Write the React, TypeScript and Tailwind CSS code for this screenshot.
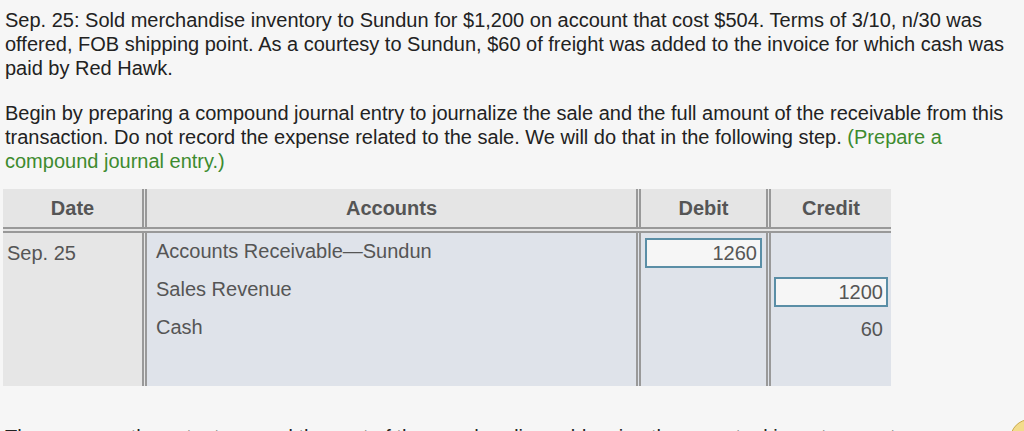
import React from 'react';

const Input = ({ value }: { value: string }) => (
  <div className="h-[30px] border-2 border-[#5a8ea6] bg-[#f6f6f6] text-right pr-[3px] text-[20px] leading-[26px] text-[#555]">
    {value}
  </div>
);

export default function App() {
  return (
    <div className="relative h-[431px] overflow-hidden bg-[#f6f6f6] font-['Liberation_Sans',Arial,sans-serif]">
      <div className="pl-[5px] pt-[8px] text-[20px] leading-[24px] text-[#222]">
        <p className="whitespace-nowrap">
          Sep. 25: Sold merchandise inventory to Sundun for $1,200 on account that cost $504. Terms of 3/10, n/30 was
          <br />
          offered, FOB shipping point. As a courtesy to Sundun, $60 of freight was added to the invoice for which cash was
          <br />
          paid by Red Hawk.
        </p>
        <p className="mt-[21px] whitespace-nowrap">
          Begin by preparing a compound journal entry to journalize the sale and the full amount of the receivable from this
          <br />
          transaction. Do not record the expense related to the sale. We will do that in the following step.{' '}
          <span className="text-[#3d8b2f]">(Prepare a</span>
          <br />
          <span className="text-[#3d8b2f]">compound journal entry.)</span>
        </p>
      </div>

      {/* journal table */}
      <div className="ml-[3px] mt-[16px] w-[888px] text-[20px] text-[#555]">
        <div className="flex h-[44px] bg-[#e5e5e5] border-b-[6px] border-double border-[#999] font-bold">
          <div className="w-[144px] flex items-center justify-center border-r-[5px] border-double border-[#999] shrink-0">Date</div>
          <div className="w-[494px] flex items-center justify-center border-r-[5px] border-double border-[#999] shrink-0">Accounts</div>
          <div className="w-[130px] flex items-center justify-center border-r-[5px] border-double border-[#999] shrink-0">Debit</div>
          <div className="flex-1 flex items-center justify-center">Credit</div>
        </div>
        <div className="flex h-[153px]">
          <div className="w-[144px] shrink-0 bg-[#e6e6e6] border-r-[5px] border-double border-[#999] pl-[4px] pt-[8px] leading-[24px]">
            Sep. 25
          </div>
          <div className="w-[494px] shrink-0 bg-[#dfe3ea] border-r-[5px] border-double border-[#999] pl-[9px] pt-[6px] flex flex-col leading-[24px] gap-[14px]">
            <span>Accounts Receivable—Sundun</span>
            <span>Sales Revenue</span>
            <span>Cash</span>
          </div>
          <div className="w-[130px] shrink-0 bg-[#dfe3ea] border-r-[5px] border-double border-[#999] pt-[5px] pl-[4px] pr-[4px]">
            <Input value="1260" />
          </div>
          <div className="flex-1 bg-[#dfe3ea] pt-[44px] pl-[3px] pr-[3px] flex flex-col">
            <Input value="1200" />
            <span className="text-right pr-[5px] mt-[10px] leading-[24px]">60</span>
          </div>
        </div>
      </div>

      <p className="mt-[39px] pl-[5px] text-[20px] leading-[24px] text-[#222] whitespace-nowrap">
        Then prepare the entry to record the cost of the merchandise sold, using the perpetual inventory system.
      </p>

      <div className="absolute left-[1010px] top-[419px] w-[40px] h-[40px] rounded-full bg-[#f3dc8c] border border-[#c9a94a]" />
    </div>
  );
}
